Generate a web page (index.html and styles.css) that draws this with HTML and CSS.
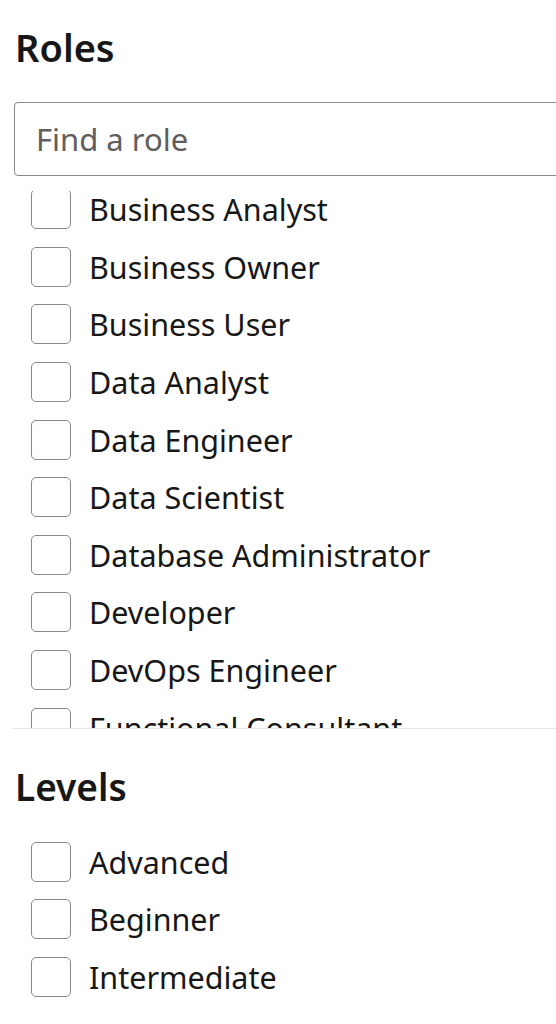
FILE: index.html
```html
<!DOCTYPE html>
<html lang="en">
<head>
<meta charset="utf-8">
<link rel="stylesheet" href="styles.css">
</head>
<body>
<div class="panel">
  <h2 class="title">Roles</h2>
  <div class="search"><input class="search-input" type="text" placeholder="Find a role"></div>
  <div class="scroller">
    <ul class="list list-roles">
      <li class="item"><span class="box"></span><span class="label">Business Analyst</span></li>
      <li class="item"><span class="box"></span><span class="label">Business Owner</span></li>
      <li class="item"><span class="box"></span><span class="label">Business User</span></li>
      <li class="item"><span class="box"></span><span class="label">Data Analyst</span></li>
      <li class="item"><span class="box"></span><span class="label">Data Engineer</span></li>
      <li class="item"><span class="box"></span><span class="label">Data Scientist</span></li>
      <li class="item"><span class="box"></span><span class="label">Database Administrator</span></li>
      <li class="item"><span class="box"></span><span class="label">Developer</span></li>
      <li class="item"><span class="box"></span><span class="label">DevOps Engineer</span></li>
      <li class="item"><span class="box"></span><span class="label">Functional Consultant</span></li>
    </ul>
  </div>
  <h2 class="title title-levels">Levels</h2>
  <ul class="list list-levels">
    <li class="item"><span class="box"></span><span class="label">Advanced</span></li>
    <li class="item"><span class="box"></span><span class="label">Beginner</span></li>
    <li class="item"><span class="box"></span><span class="label">Intermediate</span></li>
  </ul>
</div>
</body>
</html>
```
FILE: styles.css
```css
html, body {
  margin: 0;
  padding: 0;
  background: #ffffff;
  overflow: hidden;
}
body {
  font-family: "Noto Sans", "Open Sans", sans-serif;
  color: #171717;
}
.panel {
  padding: 23px 0 0 14px;
  width: 620px;
}
.title {
  margin: 0;
  font-size: 38px;
  font-weight: 600;
  line-height: 48px;
  color: #171717;
  padding-left: 1px;
}
.title-levels {
  margin-top: 34px;
  font-size: 37px;
}
.search {
  margin-top: 31px;
}
.search-input {
  box-sizing: border-box;
  display: block;
  width: 620px;
  height: 74px;
  border: 1px solid #8a8886;
  border-radius: 4px;
  padding: 0 0 0 21px;
  font-family: inherit;
  font-size: 31px;
  color: #171717;
  outline: none;
  background: #fff;
}
.search-input::placeholder {
  color: #605e5c;
}
.scroller {
  margin-top: 15px;
  margin-left: -1px;
  padding-left: 1px;
  height: 537px;
  overflow: hidden;
  border-bottom: 1px solid #e3e3e3;
}
.list {
  list-style: none;
  margin: 0;
  padding: 0;
}
.list-roles {
  margin-top: -10.6px;
}
.list-levels {
  margin-top: 22px;
}
.item {
  display: flex;
  align-items: center;
  height: 57.6px;
  padding-left: 17px;
  gap: 18px;
}
.box {
  box-sizing: border-box;
  flex: none;
  width: 40px;
  height: 40px;
  border: 1.5px solid #8a8886;
  border-radius: 5px;
  background: #fff;
}
.label {
  font-size: 30.5px;
  line-height: 40px;
  color: #171717;
  white-space: nowrap;
}
```
